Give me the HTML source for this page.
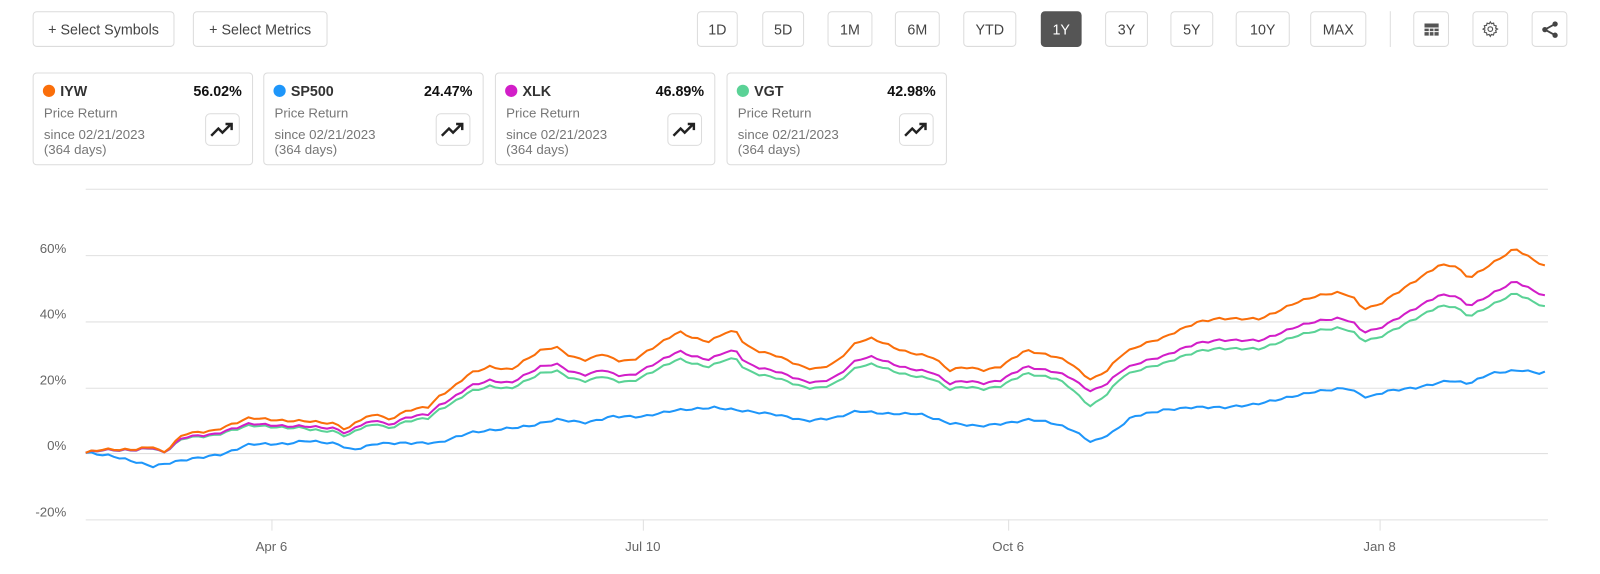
<!DOCTYPE html>
<html><head><meta charset="utf-8"><style>
*{box-sizing:border-box;margin:0;padding:0}
html,body{width:1600px;height:574px;overflow:hidden;background:#fff}
#w{position:absolute;left:0;top:0;width:1568px;height:562px;transform:scale(1.0204);transform-origin:0 0;font-family:"Liberation Sans",Arial,sans-serif;color:#333}
.b{position:absolute;top:11px;height:35px;border:1px solid #dcdcdc;border-radius:4px;background:#fff;font-size:14px;color:#444;display:flex;align-items:center;justify-content:center}
.b.on{background:#555;color:#fff;border-color:#555}
.c{position:absolute;top:71px;width:216px;height:91px;border:1px solid #dcdcdc;border-radius:4px}
.c .d{position:absolute;left:9px;top:11px;width:12px;height:12px;border-radius:50%}
.c .n{position:absolute;left:26px;top:9px;font-weight:bold;font-size:14px;color:#333}
.c .p{position:absolute;right:10px;top:9px;font-weight:bold;font-size:14px;color:#111}
.c .s{position:absolute;left:10px;font-size:13px;color:#777}
.c .i{position:absolute;left:168px;top:39px;width:34px;height:32px;border:1px solid #dcdcdc;border-radius:5px;display:flex;align-items:center;justify-content:center}
.yl{position:absolute;right:1503px;font-size:13px;color:#666}
.xl{position:absolute;top:528px;font-size:13px;color:#666;transform:translateX(-50%)}
</style></head><body><div id="w">
<div class="b" style="left:32px;width:139px">+ Select Symbols</div>
<div class="b" style="left:189px;width:132px">+ Select Metrics</div>
<div class="b" style="left:683px;width:40px">1D</div>
<div class="b" style="left:747px;width:41px">5D</div>
<div class="b" style="left:811px;width:44px">1M</div>
<div class="b" style="left:877px;width:44px">6M</div>
<div class="b" style="left:944px;width:52px">YTD</div>
<div class="b on" style="left:1020px;width:40px">1Y</div>
<div class="b" style="left:1083px;width:42px">3Y</div>
<div class="b" style="left:1147px;width:42px">5Y</div>
<div class="b" style="left:1211px;width:53px">10Y</div>
<div class="b" style="left:1284px;width:55px">MAX</div>
<div style="position:absolute;left:1362px;top:11px;width:1px;height:35px;background:#ddd"></div>
<div class="b" style="left:1385px;width:35px"><svg width="14" height="12" viewBox="0 0 14 12"><rect x="0" y="0" width="14" height="12" fill="#555"/><g stroke="#fff" stroke-width="1"><path d="M0 4.5H14M0 8H14M4.7 4V12M9.3 4V12"/></g></svg></div>
<div class="b" style="left:1443px;width:35px"><svg width="17" height="17" viewBox="0 0 24 24" fill="none" stroke="#555" stroke-width="1.6"><circle cx="12" cy="12" r="3.2"/><path d="M12 2l1.6 2.6 3-.8.6 3 3 .8-.8 3L22 12l-2.6 1.6.8 3-3 .6-.8 3-3-.8L12 22l-1.6-2.6-3 .8-.6-3-3-.8.8-3L2 12l2.6-1.6-.8-3 3-.6.8-3 3 .8z"/></svg></div>
<div class="b" style="left:1501px;width:35px"><svg width="18" height="18" viewBox="0 0 18 18"><g fill="#444"><circle cx="14" cy="3.5" r="2.6"/><circle cx="4" cy="9" r="2.6"/><circle cx="14" cy="14.5" r="2.6"/></g><path d="M14 3.5L4 9L14 14.5" stroke="#444" stroke-width="1.8" fill="none"/></svg></div>

<div class="c" style="left:32px"><div class="d" style="background:#fa6e0a"></div><div class="n">IYW</div><div class="p">56.02%</div><div class="s" style="top:31px">Price Return</div><div class="s" style="top:52px">since 02/21/2023</div><div class="s" style="top:67px">(364 days)</div><div class="i"><svg width="24" height="16" viewBox="0 0 24 16"><path d="M1 14l7-7 4 4 8-8M15 2.5h6v6" stroke="#222" stroke-width="2.4" fill="none"/></svg></div></div>
<div class="c" style="left:258px"><div class="d" style="background:#1e96fa"></div><div class="n">SP500</div><div class="p">24.47%</div><div class="s" style="top:31px">Price Return</div><div class="s" style="top:52px">since 02/21/2023</div><div class="s" style="top:67px">(364 days)</div><div class="i"><svg width="24" height="16" viewBox="0 0 24 16"><path d="M1 14l7-7 4 4 8-8M15 2.5h6v6" stroke="#222" stroke-width="2.4" fill="none"/></svg></div></div>
<div class="c" style="left:485px"><div class="d" style="background:#d21ec8"></div><div class="n">XLK</div><div class="p">46.89%</div><div class="s" style="top:31px">Price Return</div><div class="s" style="top:52px">since 02/21/2023</div><div class="s" style="top:67px">(364 days)</div><div class="i"><svg width="24" height="16" viewBox="0 0 24 16"><path d="M1 14l7-7 4 4 8-8M15 2.5h6v6" stroke="#222" stroke-width="2.4" fill="none"/></svg></div></div>
<div class="c" style="left:712px"><div class="d" style="background:#5ad296"></div><div class="n">VGT</div><div class="p">42.98%</div><div class="s" style="top:31px">Price Return</div><div class="s" style="top:52px">since 02/21/2023</div><div class="s" style="top:67px">(364 days)</div><div class="i"><svg width="24" height="16" viewBox="0 0 24 16"><path d="M1 14l7-7 4 4 8-8M15 2.5h6v6" stroke="#222" stroke-width="2.4" fill="none"/></svg></div></div>

<div class="yl" style="top:236px">60%</div>
<div class="yl" style="top:300px">40%</div>
<div class="yl" style="top:365px">20%</div>
<div class="yl" style="top:429px">0%</div>
<div class="yl" style="top:494px">-20%</div>
<div class="xl" style="left:266px">Apr 6</div>
<div class="xl" style="left:630px">Jul 10</div>
<div class="xl" style="left:988px">Oct 6</div>
<div class="xl" style="left:1352px">Jan 8</div>
<svg id="ch" width="1568" height="562" style="position:absolute;left:0;top:0">
<g stroke="#e0e0e0" stroke-width="1"><path d="M84 185.5H1517M84 250.5H1517M84 315.5H1517M84 380.5H1517M84 444.5H1517M84 509.5H1517"/><path d="M266.5 509V520M630.5 509V520M988.5 509V520M1352.5 509V520"/></g>
</svg>
</div>
<script>
var I=[[84,0],[100,1],[130,1],[150,2],[160,0],[180,6],[210,7],[245,11],[280,10],[300,10],[330,9],[340,7],[350,10],[370,12],[380,10],[400,13],[420,14],[430,17],[445,20],[460,24],[480,26],[500,25],[510,27],[530,31],[545,32],[560,29],[575,28],[590,30],[605,28],[620,28],[640,32],[665,37],[680,35],[695,34],[712,37],[722,37],[730,33],[745,31],[760,30],[775,28],[790,26],[805,26],[820,28],[840,34],[855,35],[870,33],[885,31],[900,30],[915,29],[930,25],[945,26],[965,25],[980,26],[990,28],[1005,31],[1020,30],[1035,29],[1050,27],[1060,24],[1070,22],[1085,25],[1100,30],[1120,33],[1140,35],[1160,38],[1175,40],[1195,41],[1215,41],[1235,41],[1250,43],[1270,46],[1290,48],[1310,49],[1325,48],[1335,44],[1350,45],[1370,49],[1390,53],[1410,57],[1425,57],[1440,53],[1455,56],[1470,59],[1485,62],[1500,59],[1517,56]];
var S=[[84,0],[110,-1],[150,-4],[180,-2],[220,0],[245,3],[280,3],[300,4],[330,3],[345,1],[370,3],[400,3],[430,3],[460,6],[490,7],[520,8],[545,10],[575,9],[600,11],[630,11],[660,13],[700,14],[730,13],[760,12],[790,10],[820,11],[840,13],[870,12],[900,12],[930,9],[960,8],[990,9],[1010,10],[1030,9],[1050,7],[1070,3],[1090,6],[1110,11],[1140,13],[1170,14],[1200,14],[1230,15],[1260,17],[1290,19],[1320,20],[1340,17],[1360,19],[1390,20],[1420,22],[1440,21],[1460,24],[1490,25],[1510,24],[1517,24.5]];
function val(a,x){for(var i=1;i<a.length;i++){if(x<=a[i][0]){var t=(x-a[i-1][0])/(a[i][0]-a[i-1][0]);return a[i-1][1]+t*(a[i][1]-a[i-1][1]);}}return a[a.length-1][1];}
function line(f,col){var p=[];for(var x=84;x<=1517;x+=5.5){var n=Math.sin(x*0.37)*0.3+Math.sin(x*1.13)*0.25;p.push(x.toFixed(1)+','+(444-(f(x)+n)*3.225).toFixed(1));}
var e=document.createElementNS('http://www.w3.org/2000/svg','polyline');e.setAttribute('points',p.join(' '));e.setAttribute('fill','none');e.setAttribute('stroke',col);e.setAttribute('stroke-width','2');document.getElementById('ch').appendChild(e);}
line(function(x){return val(S,x)},'#1e96fa');
line(function(x){var v=val(I,x);var k=x>1040&&x<1100?(1-Math.abs(x-1068)/32)*3:0;return v*0.79-(x>300?0.5:0)-k},'#5ad296');
line(function(x){return val(I,x)*0.84},'#d21ec8');
line(function(x){return val(I,x)},'#fa6e0a');
</script>
</body></html>
